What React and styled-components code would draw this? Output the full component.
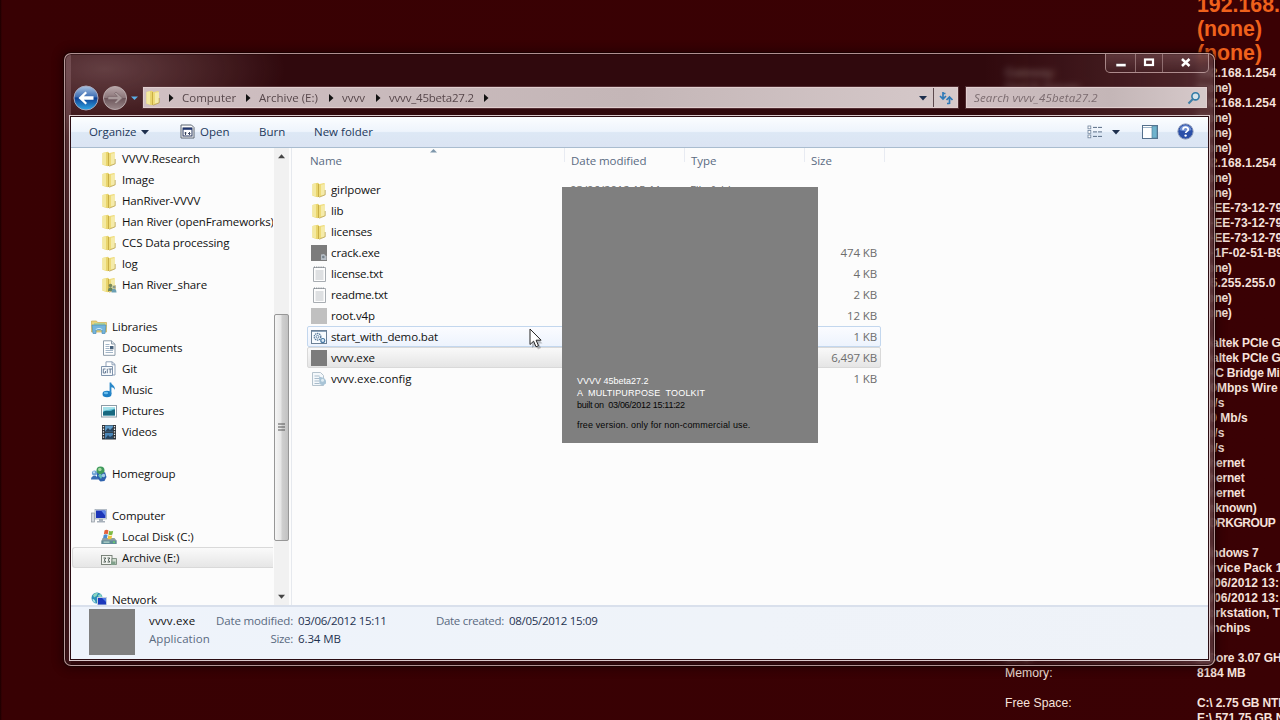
import React from "react";
import styled, { createGlobalStyle, css } from "styled-components";

const Global = createGlobalStyle`
  html, body { margin: 0; padding: 0; background: #380103; }
  * { box-sizing: border-box; }
  svg { display: block; flex: none; }
`;

const ui = '"Open Sans", "Noto Sans", sans-serif';
const arial = '"Liberation Sans", Arial, sans-serif';

const Desktop = styled.div`
  position: relative;
  width: 1280px;
  height: 720px;
  overflow: hidden;
  background: linear-gradient(90deg, #1a0000 0, #380103 2px, #3a0104 100%);
  font-family: ${ui};
  font-size: 11.5px;
  letter-spacing: -0.13px;
  color: #111;
  white-space: nowrap;
`;

/* ---------- desktop system info ---------- */
const InfoPanel = styled.div`
  position: absolute;
  left: 1005px;
  top: -7px;
  width: 275px;
  height: 727px;
  overflow: hidden;
  display: grid;
  grid-template-columns: 192px 1fr;
  align-content: start;
  font-family: ${arial};
  color: #f6e2dc;
  letter-spacing: 0.15px;
`;
const InfoHeads = styled.div`
  grid-column: 2;
  height: 72px;
  font-size: 21.3px;
  line-height: 24px;
  font-weight: 700;
  color: #f0611c;
  letter-spacing: 0;
`;
const InfoLabel = styled.div`
  height: 15px;
  line-height: 16px;
  font-size: 12.2px;
  letter-spacing: 0.02px;
`;
const InfoValue = styled(InfoLabel)`
  font-weight: 700;
  font-size: 12px;
  letter-spacing: ${(p) => p.$ls}px;
`;

const IP = ["192.168.1.254", 0.18];
const NONE = ["(none)", -0.4];
const MAC = ["00-EE-73-12-79", -0.02];
const values = [
  IP, NONE, IP, NONE, NONE, NONE, IP, NONE, NONE,
  MAC, MAC, MAC, ["00-1F-02-51-B9", 0.05], NONE, ["255.255.255.0", 0.15], NONE, NONE, [""],
  ["Realtek PCIe G", -0.12], ["Realtek PCIe G", -0.12], ["MAC Bridge Mi", -0.2], ["300Mbps Wire", 0], ["Mb/s", 0], ["100 Mb/s", 0],
  ["Mb/s", 0], ["Mb/s", 0], ["Ethernet", -0.15], ["Ethernet", -0.15], ["Ethernet", -0.15], ["(unknown)", -0.12],
  ["WORKGROUP", -0.4], [""], ["Windows 7", -0.1], ["Service Pack 1", 0.1],
  ["03/06/2012 13:", 0.1], ["03/06/2012 13:", 0.1], ["Workstation, T", 0], ["Benchips", -0.1], [""],
  ["6-Core 3.07 GH", -0.1], ["8184 MB", 0], [""],
  ["C:\\ 2.75 GB NTF", -0.15], ["E:\\ 571.75 GB N", -0.1],
];
const labels = { 0: "Gateway:", 1: "DHCP Server:", 39: "CPU:", 40: "Memory:", 42: "Free Space:" };

/* ---------- window ---------- */
const Window = styled.div`
  position: absolute;
  left: 64px;
  top: 53px;
  width: 1151px;
  height: 613px;
  border: 1px solid rgba(225, 195, 195, 0.72);
  border-radius: 7px;
  padding: 0 4px 4px;
  display: flex;
  flex-direction: column;
  backdrop-filter: blur(3px);
  background:
    radial-gradient(ellipse 180px 70px at 40px 15px, rgba(150, 115, 120, 0.5), rgba(150, 115, 120, 0) 100%),
    linear-gradient(90deg, rgba(150, 110, 115, 0) 80%, rgba(150, 110, 115, 0.25) 97%, rgba(150, 110, 115, 0.35) 100%),
    linear-gradient(180deg, rgba(150, 110, 115, 0.42) 60px, rgba(150, 110, 115, 0.1) 230px) 0 0 / 6px 100% no-repeat,
    rgba(44, 14, 20, 0.62);
  box-shadow: 0 0 0 1px rgba(20, 0, 0, 0.65), 0 0 10px 3px rgba(15, 0, 0, 0.45), inset 0 0 0 1px rgba(30, 5, 8, 0.5);
`;
const TitleBar = styled.div`
  height: 19px;
  display: flex;
  justify-content: flex-end;
  padding-right: 1px;
`;
const Caption = styled.div`
  display: flex;
  width: 104px;
  height: 19px;
  border: 1px solid rgba(215, 185, 185, 0.65);
  border-top: 0;
  border-radius: 0 0 5px 5px;
  background: linear-gradient(rgba(150, 110, 115, 0.35), rgba(70, 35, 40, 0.5));
`;
const CaptionButton = styled.div`
  width: ${(p) => p.$w}px;
  padding-bottom: 2px;
  display: flex;
  align-items: center;
  justify-content: center;
  & + & { border-left: 1px solid rgba(205, 175, 175, 0.5); }
`;
const NavBar = styled.div`
  height: 42px;
  padding: 14px 2px 0 4px;
  display: flex;
  align-items: flex-start;
`;
const NavButtons = styled.div`
  display: flex;
  width: 70px;
  height: 27px;
  margin-top: -2px;
`;
const glassField = css`
  height: 21px;
  border: 1px solid #e2cfcf;
  background: linear-gradient(90deg, #d0bfc2, #c9babc 30%, #c4b6b7 60%, #d6c9ca);
  box-shadow: 0 0 0 1px rgba(90, 55, 60, 0.8);
  display: flex;
  align-items: center;
  color: #57474b;
`;
const AddressBar = styled.div`
  ${glassField}
  width: 815px;
  padding-left: 1px;
  line-height: 19px;
`;
const Crumb = styled.span`
  width: ${(p) => p.$w}px;
  letter-spacing: ${(p) => p.$ls ?? 0}px;
`;
const CrumbArrow = styled.span`
  width: ${(p) => p.$w}px;
  padding-left: ${(p) => p.$pad ?? 0}px;
  display: flex;
`;
const AddressTail = styled.div`
  margin-left: auto;
  display: flex;
  align-items: center;
  height: 19px;
`;
const Refresh = styled.div`
  margin-left: 6px;
  width: 24px;
  height: 19px;
  border-left: 1px solid #5d4a4e;
  display: flex;
  align-items: center;
  justify-content: center;
`;
const SearchBox = styled.div`
  ${glassField}
  margin-left: 8px;
  width: 241px;
  padding: 0 5px 0 7px;
  justify-content: space-between;
  font-style: italic;
  color: #7b6b6f;
  letter-spacing: 0.16px;
`;

const Client = styled.div`
  flex: 1;
  min-height: 0;
  border: 1px solid #d9c8ca;
  outline: 1px solid #2a0c12;
  outline-offset: -2px;
  padding: 1px;
  display: flex;
  flex-direction: column;
  background: #fcfcfc;
`;
const Toolbar = styled.div`
  height: 31px;
  flex: none;
  display: flex;
  align-items: center;
  padding: 0 14px 1px 18px;
  color: #1e395b;
  border-bottom: 1px solid #a9bccf;
  background: linear-gradient(#fbfdff 0, #eef4fc 48%, #dde8f5 52%, #dbe4f3 100%);
  letter-spacing: 0;
`;
const ToolItem = styled.div`
  display: flex;
  align-items: center;
  gap: ${(p) => p.$gap ?? 0}px;
  width: ${(p) => p.$w}px;
  letter-spacing: ${(p) => p.$ls ?? 0}px;
`;
const ToolIcons = styled.div`
  margin-left: auto;
  display: flex;
  align-items: center;
`;
const ToolGap = styled.span`
  width: ${(p) => p.$w}px;
`;
const Body = styled.div`
  flex: 1;
  min-height: 0;
  display: flex;
`;

/* navigation tree */
const Sidebar = styled.div`
  width: 221px;
  display: flex;
  gap: 1px;
  border-right: 1px solid #e6e9ee;
  overflow: hidden;
`;
const Tree = styled.div`
  width: 202px;
  overflow: hidden;
`;
const TreeRow = styled.div`
  height: 21px;
  display: flex;
  align-items: center;
  padding-left: ${(p) => (p.$root ? 18 : 28)}px;
  gap: 5px;
  margin-left: 1px;
  border: 1px solid transparent;
  border-right: 0;
  letter-spacing: -0.13px;
  ${(p) => p.$selected && css`
    border-color: #d9d9d9;
    border-radius: 3px 0 0 3px;
    background: linear-gradient(#fafafa, #e6e6e6);
  `}
`;
const ScrollTrack = styled.div`
  width: 15px;
  display: flex;
  flex-direction: column;
  align-items: center;
  background: #f1f1f1;
`;
const ScrollArrow = styled.div`
  height: 17px;
  width: 15px;
  display: flex;
  align-items: center;
  justify-content: center;
`;
const ScrollThumb = styled.div`
  margin-top: 149px;
  margin-bottom: auto;
  width: 15px;
  height: 227px;
  border: 1px solid #979797;
  border-radius: 2px;
  background: linear-gradient(90deg, #f5f5f5, #e6e6e6 45%, #cfcfcf 55%, #c2c2c2);
  display: flex;
  align-items: center;
  justify-content: center;
`;

/* file list */
const Files = styled.div`
  flex: 1;
  padding-left: 15px;
`;
const Header = styled.div`
  height: 31px;
  display: flex;
  position: relative;
  color: #5a6b82;
  letter-spacing: -0.05px;
`;
const HeaderCell = styled.div`
  width: ${(p) => p.$w}px;
  height: 14px;
  padding-left: ${(p) => p.$pad ?? 6}px;
  line-height: 25px;
  border-right: 1px solid #e8ebf2;
`;
const SortMark = styled.div`
  position: absolute;
  left: 123px;
  top: 0;
`;
const FileRow = styled.div`
  width: 574px;
  height: 21px;
  display: flex;
  align-items: center;
  border: 1px solid transparent;
  border-radius: 2px;
  padding: 0 3px 0 3px;
  ${(p) => p.$state === "hover" && css`
    border-color: #c3d7ee;
    background: linear-gradient(#fbfcff, #edf3fd);
  `}
  ${(p) => p.$state === "selected" && css`
    border-color: #d9d9d9;
    background: linear-gradient(#f9f9f9, #e5e5e5);
  `}
`;
const FileName = styled.span`
  width: 243px;
  padding-left: 4px;
  letter-spacing: ${(p) => p.$ls ?? -0.13}px;
`;
const FileMeta = styled.span`
  width: ${(p) => p.$w}px;
  color: #6d6d6d;
`;
const FileSize = styled(FileMeta)`
  margin-left: auto;
`;

/* details pane */
const Details = styled.div`
  height: 54px;
  flex: none;
  border-top: 2px solid #d9e0ec;
  background: linear-gradient(90deg, #eef3fb, #eff3f9 60%, #eef2f8);
  display: flex;
  padding: 2px 0 0 18px;
`;
const Thumb = styled.div`
  width: 46px;
  height: 46px;
  background: #7f7f7f;
`;
const DetailGrid = styled.div`
  margin: 0 0 0 14px;
  display: grid;
  grid-template-columns: 67px 80px 133px 78px 100px;
  grid-auto-rows: 18px;
  align-items: center;
  align-content: start;
  padding-top: 2px;
  color: #1e3250;
`;
const DetailKey = styled.span`
  color: #5a6a80;
  text-align: right;
  padding-right: 3px;
  margin-left: -10px;
  letter-spacing: ${(p) => p.$ls ?? -0.1}px;
`;
const DetailValue = styled.span`
  padding-left: 2px;
  letter-spacing: ${(p) => p.$ls ?? -0.1}px;
`;
const DetailName = styled.span`
  color: #111;
  letter-spacing: 0.18px;
`;
const DetailKind = styled.span`
  color: #5a6a80;
  letter-spacing: 0.08px;
`;

/* splash */
const Splash = styled.div`
  position: absolute;
  left: 562px;
  top: 187px;
  width: 256px;
  height: 256px;
  background: #7f7f7f;
  padding: 188px 0 0 15px;
  font-family: ${arial};
  font-size: 9px;
  line-height: 12px;
`;
const SplashLine = styled.div`
  color: ${(p) => (p.$light ? "#fff" : "#050505")};
  letter-spacing: ${(p) => p.$ls ?? 0}px;
  margin-top: ${(p) => p.$gap ?? 0}px;
  white-space: pre;
`;
const Pointer = styled.div`
  position: absolute;
  left: 529px;
  top: 328px;
`;

/* ---------- icons ---------- */
const Folder = ({ share }) => (
  <svg width="16" height="16" viewBox="0 0 16 16">
    <path d="M1.500 2 7 .8l1 1V14.500l-1.500.8-5-1.600z" fill="#e9d56d" />
    <path d="M1.500 2 5 1.200v13.300l-3.500-1z" fill="#f4e9a0" />
    <path d="M7.500 2.300 13 1l1 .8v11l-6 2.200z" fill="#eedb78" />
    <path d="M10 2.700l4-.6v10.300l-4 1.200z" fill="#f5ebaa" />
    <path d="M7.500 2V15" stroke="#c9ae45" strokeWidth="1" />
    <path d="M14.200 8v4.800l-6 2.400" stroke="#b9a14c" strokeWidth=".8" fill="none" />
    {share && (
      <g>
        <circle cx="9.500" cy="8.500" r="1.800" fill="#7d8a5a" />
        <path d="M7 14c0-5 5-5 5 0z" fill="#69855f" />
        <circle cx="13" cy="10" r="1.600" fill="#8d9a8a" />
        <path d="M10.500 15.500c0-5 5-5 5 0z" fill="#6a9fb4" />
      </g>
    )}
  </svg>
);
const Libraries = () => (
  <svg width="16" height="16" viewBox="0 0 16 16">
    <path d="M.5 2h5l1 1.500h9V13H.5z" fill="#ead37a" stroke="#c8ad55" strokeWidth=".7" />
    <path d="M3 4h11v3H3z" fill="#a9cf9a" />
    <path d="M1 6h14l-1 8.500h-3V11H5v3.500H2z" fill="#74b5dd" stroke="#4c8cb8" strokeWidth=".7" />
    <path d="M5 11c0-2 6-2 6 0" fill="none" stroke="#d6edf8" />
  </svg>
);
const Doc = () => (
  <svg width="16" height="16" viewBox="0 0 16 16">
    <path d="M2.500.8h8L14 4v11.300H2.500z" fill="#fff" stroke="#8b9aa8" />
    <path d="M10.500.8V4H14" fill="#dde5ec" stroke="#8b9aa8" />
    <path d="M4.500 4.500h4M4.500 6.500h4M4.500 8.500h4M4.500 10.500h7.500M4.500 12.500h7.500" stroke="#9aaec2" strokeWidth=".9" />
    <path d="M9 6h3.500v3.300H9z" fill="#48627c" />
  </svg>
);
const Git = () => (
  <svg width="16" height="16" viewBox="0 0 16 16">
    <path d="M5 .8h6l3 2.500V14H5z" fill="#fff" stroke="#8fa1b8" />
    <path d="M11 .8v3h3" fill="none" stroke="#8fa1b8" />
    <path d="M.5 5.500h11v9H.5z" fill="#f6f9fc" stroke="#7f93ac" />
    <path d="M4.500 8H2.300v4h2.200v-2M6.300 7.800v4.400M7.500 8H11M9.200 8v4.200" stroke="#687c96" fill="none" />
  </svg>
);
const Music = () => (
  <svg width="16" height="16" viewBox="0 0 16 16">
    <ellipse cx="6" cy="12" rx="4.500" ry="3.200" fill="#1d7fc4" />
    <ellipse cx="5" cy="11" rx="2.200" ry="1.300" fill="#6cbdec" />
    <path d="M8.600 12V.5h1.600c.3 2.700 4.200 3 3.700 7.500-.5-1.700-1.800-2.600-3.500-2.800V12z" fill="#2a88c9" />
  </svg>
);
const Pictures = () => (
  <svg width="16" height="16" viewBox="0 0 16 16">
    <rect x=".5" y="2.500" width="15" height="11.500" fill="#fff" stroke="#8c9ba6" />
    <rect x="2" y="4" width="12" height="8.500" fill="#59bcd3" />
    <path d="M2 9.500c3-3 5-1 7-1.500s3-2 5-1.500v6H2z" fill="#17687f" />
    <path d="M2 4h12v1.500L2 8z" fill="#a6e1ea" />
  </svg>
);
const Videos = () => (
  <svg width="16" height="16" viewBox="0 0 16 16">
    <rect x="1" y="1" width="14" height="14.500" fill="#2d3238" />
    <rect x="4" y="1.500" width="8" height="6.300" fill="#5f9bc8" />
    <rect x="4" y="8.800" width="8" height="6.200" fill="#4a86b8" />
    <path d="M4 7.500 7 4l2 2 3-3v4.800H4zM4 15l3-4 2 2 3-2v4z" fill="#28455f" />
    <path d="M2.500 2v13M13.500 2v13" stroke="#e8edf0" strokeWidth="1.300" strokeDasharray="1.300 1.300" />
  </svg>
);
const Homegroup = () => (
  <svg width="16" height="16" viewBox="0 0 16 16">
    <circle cx="3.500" cy="7" r="2.600" fill="#6fa2d6" />
    <path d="M0 13.500c0-5 7-5 7 0z" fill="#3a6db4" />
    <circle cx="9.500" cy="4.500" r="4" fill="#3f9a5c" />
    <circle cx="8.800" cy="3.500" r="1.800" fill="#a6daa0" />
    <path d="M6 6.500 9 9l5-3 1.500 5-2 4-4 .5L6 12z" fill="#2f62ae" />
    <path d="M7 9.500 9.500 8l2 2-1.500 3z" fill="#5fc0b6" />
    <circle cx="12.500" cy="9.500" r="1.700" fill="#9fcbe8" />
    <circle cx="3" cy="6.300" r="1.100" fill="#c5dff3" />
  </svg>
);
const Computer = () => (
  <svg width="16" height="16" viewBox="0 0 16 16">
    <rect x=".5" y="5" width="3" height="9" fill="#d5dae0" stroke="#8d969f" strokeWidth=".7" />
    <rect x="4" y="1.500" width="11.500" height="9.500" fill="#dfe5ec" stroke="#9aa5b3" strokeWidth=".7" />
    <rect x="5" y="2.500" width="9.500" height="7.500" fill="#1c35b8" />
    <path d="M10 2.500h4.500V8z" fill="#5f86e8" />
    <path d="M8 11h4v2h2v1.500H6V13h2z" fill="#a7b0ba" />
  </svg>
);
const LocalDisk = () => (
  <svg width="16" height="16" viewBox="0 0 16 16">
    <path d="M1.500 9h12l2 2.500v3.500H.5v-3z" fill="#8f9ea2" />
    <path d="M.5 11.500h15V15H.5z" fill="#5f8c98" />
    <path d="M2.500 12.500h6v1.300h-6z" fill="#b5d5cc" />
    <circle cx="13" cy="13.300" r="1" fill="#69d36a" />
    <path d="M3.500 1.500q2-1.500 4 0l-.8 3.700q-2-1-3.800 0z" fill="#e3603a" />
    <path d="M8.200 1.700q2 1 4 0l-.8 3.800q-2 1-4 0z" fill="#7db943" />
    <path d="M2.700 5.900q2-1.100 3.900 0L5.800 9.500q-2-1-3.800 0z" fill="#4a8dd2" />
    <path d="M7.300 6.200q2 1 3.900 0l-.8 3.600q-2 1-3.900 0z" fill="#efc43c" />
  </svg>
);
const Archive = () => (
  <svg width="16" height="16" viewBox="0 0 16 16">
    <rect x=".5" y="5.500" width="10.500" height="9" fill="#f2f4f0" stroke="#707a70" strokeWidth=".9" />
    <path d="M2.500 8h2.300l-1.500 2 1.500 2H2.500M6.500 8h2.300l-1.500 2 1.500 2H6.500" fill="none" stroke="#4e5c56" />
    <path d="M11 8.500h4.500v6H11z" fill="#cfdccf" stroke="#6c7d70" strokeWidth=".8" />
    <path d="M10 11.500h4.500v3.500H10z" fill="#80a08b" />
  </svg>
);
const Network = () => (
  <svg width="16" height="16" viewBox="0 0 16 16">
    <circle cx="6" cy="6" r="5.500" fill="#2d8fb9" />
    <path d="M2 3c2-2 4-2.500 5-2L5.500 4 3 5.500zM7 3l3-1 1 3-3 2z" fill="#8bd6c0" />
    <path d="M1.500 7c2 0 3 2 3 4-2-1-3-2-3-4z" fill="#b4e6e2" />
    <rect x="6.500" y="5.500" width="9" height="7.500" fill="#1b38bc" stroke="#c4d0de" />
    <path d="M11 6h4v4z" fill="#527fe6" />
    <path d="M9 13.500h4V15H9z" fill="#9ba6b3" />
  </svg>
);
const Block = ({ fill, mark }) => (
  <svg width="16" height="16" viewBox="0 0 16 16">
    <rect width="16" height="16" fill={fill} />
    {mark && <path d="M10 9.500l3-.5 2.500 2.500V15H10z" fill="#b5bcc4" />}
    {mark && <circle cx="12.300" cy="12" r="1.300" fill="#77838d" />}
  </svg>
);
const TextFile = () => (
  <svg width="16" height="16" viewBox="0 0 16 16">
    <path d="M2.500 1.500h12v14h-12z" fill="#fdfdfd" stroke="#a8adb2" />
    <path d="M3 1.300h11" stroke="#868c92" strokeWidth="1.600" strokeDasharray="1 1.200" />
    <path d="M4.500 5h8M4.500 7h8M4.500 9h8M4.500 11h8M4.500 13h8" stroke="#aeb4b9" strokeWidth=".8" />
  </svg>
);
const BatFile = () => (
  <svg width="16" height="16" viewBox="0 0 16 16">
    <rect x=".5" y="1.500" width="15" height="13" fill="#f7fbfe" stroke="#6b8096" />
    <path d="M1 2.500h14" stroke="#8ba3bb" />
    <circle cx="6.500" cy="7.800" r="3.300" fill="none" stroke="#55789b" strokeWidth="1.300" strokeDasharray="1.400 .7" />
    <circle cx="6.500" cy="7.800" r="1.400" fill="none" stroke="#6e8fae" />
    <circle cx="11.800" cy="11.500" r="2" fill="#dceaf5" stroke="#4a7aa5" strokeWidth="1.200" />
  </svg>
);
const ConfigFile = () => (
  <svg width="16" height="16" viewBox="0 0 16 16">
    <path d="M1.500 1.500h8l3 3v10h-11z" fill="#f4f8fb" stroke="#b5c3cd" />
    <path d="M3.500 5h5M3.500 7.500h7M3.500 10h5M3.500 12.500h5" stroke="#a9bccb" />
    <path d="M8 5.500l5 1.500 2 2.500v3L12 14.500 8.500 13z" fill="#a9c4d6" />
    <circle cx="11.500" cy="9.300" r="1.500" fill="#dfecf3" />
  </svg>
);
const Tri = ({ dir = "down", size = 8, fill = "#1e2f4d" }) => {
  const d = { down: "M0 2h8L4 6.500z", up: "M0 6h8L4 1.500z", right: "M2 0v8l4.500-4z" }[dir];
  return (
    <svg width={size} height={size} viewBox="0 0 8 8"><path d={d} fill={fill} /></svg>
  );
};
const BackForward = () => (
  <svg width="68" height="27" viewBox="0 0 68 27">
    <defs>
      <linearGradient id="back" x1="0" y1="0" x2="0" y2="1">
        <stop offset="0" stopColor="#a9c3e2" /><stop offset=".45" stopColor="#3f6fb5" />
        <stop offset=".5" stopColor="#0d3f92" /><stop offset="1" stopColor="#31a7e6" />
      </linearGradient>
      <linearGradient id="fwd" x1="0" y1="0" x2="0" y2="1">
        <stop offset="0" stopColor="#b9a8aa" /><stop offset=".48" stopColor="#8d777b" />
        <stop offset=".52" stopColor="#6d565b" /><stop offset="1" stopColor="#9a8789" />
      </linearGradient>
    </defs>
    <circle cx="13" cy="13" r="12" fill="url(#back)" stroke="#a9a8bc" strokeWidth="1" />
    <path d="M5.500 13 12.500 6.500l1.500 1.500-3.200 3.300h9.700v3.400h-9.700L14 18l-1.500 1.500z" fill="#fff" />
    <circle cx="42" cy="13" r="11.500" fill="url(#fwd)" stroke="#b9a9ab" strokeWidth="1" />
    <path d="M49.500 13 43 7l-1.500 1.500 2.800 2.900H35v3.200h9.300l-2.800 2.900L43 19z" fill="#a99a9b" stroke="#756266" strokeWidth=".6" />
    <path d="M58 11.500h7L61.500 15z" fill="#5aaee6" />
  </svg>
);

const folders = [
  ["VVVV.Research"], ["Image"], ["HanRiver-VVVV"], ["Han River (openFrameworks)"],
  ["CCS Data processing"], ["log"], ["Han River_share", true],
];
const tree = [
  ...folders.map(([t, share]) => ({ t, icon: <Folder share={share} /> })),
  {},
  { t: "Libraries", root: true, icon: <Libraries /> },
  { t: "Documents", icon: <Doc /> },
  { t: "Git", icon: <Git /> },
  { t: "Music", icon: <Music /> },
  { t: "Pictures", icon: <Pictures /> },
  { t: "Videos", icon: <Videos /> },
  {},
  { t: "Homegroup", root: true, icon: <Homegroup /> },
  {},
  { t: "Computer", root: true, icon: <Computer /> },
  { t: "Local Disk (C:)", icon: <LocalDisk /> },
  { t: "Archive (E:)", icon: <Archive />, selected: true },
  {},
  { t: "Network", root: true, icon: <Network /> },
];
const files = [
  { t: "girlpower", icon: <Folder />, date: "03/06/2012 15:11", type: "File folder" },
  { t: "lib", icon: <Folder /> },
  { t: "licenses", icon: <Folder /> },
  { t: "crack.exe", icon: <Block fill="#7c7c7c" mark />, size: "474 KB" },
  { t: "license.txt", icon: <TextFile />, size: "4 KB", ls: -0.2 },
  { t: "readme.txt", icon: <TextFile />, size: "2 KB", ls: -0.22 },
  { t: "root.v4p", icon: <Block fill="#c0c0c0" />, size: "12 KB" },
  { t: "start_with_demo.bat", icon: <BatFile />, size: "1 KB", state: "hover" },
  { t: "vvvv.exe", icon: <Block fill="#7c7c7c" />, size: "6,497 KB", state: "selected" },
  { t: "vvvv.exe.config", icon: <ConfigFile />, size: "1 KB", ls: 0 },
];

export default function App() {
  return (
    <Desktop>
      <Global />
      <InfoPanel>
        <InfoHeads>
          <div>192.168.</div>
          <div>(none)</div>
          <div>(none)</div>
        </InfoHeads>
        {values.map(([text, ls = 0], i) => (
          <React.Fragment key={i}>
            <InfoLabel>{labels[i]}</InfoLabel>
            <InfoValue $ls={ls}>{text}</InfoValue>
          </React.Fragment>
        ))}
      </InfoPanel>

      <Window>
        <TitleBar>
          <Caption>
            <CaptionButton $w={29}>
              <svg width="12" height="12" viewBox="0 0 12 12"><rect x="1" y="7.500" width="10" height="3.300" fill="#fff" stroke="#4a3338" strokeWidth=".6" /></svg>
            </CaptionButton>
            <CaptionButton $w={27}>
              <svg width="12" height="12" viewBox="0 0 12 12"><rect x="2" y="3.500" width="8" height="5.500" fill="none" stroke="#fff" strokeWidth="2.200" /></svg>
            </CaptionButton>
            <CaptionButton $w={46}>
              <svg width="12" height="12" viewBox="0 0 12 12"><path d="m2 3 7.500 7M9.500 3 2 10" stroke="#fff" strokeWidth="2.500" /></svg>
            </CaptionButton>
          </Caption>
        </TitleBar>
        <NavBar>
          <NavButtons><BackForward /></NavButtons>
          <AddressBar>
            <Folder />
            <CrumbArrow $w={21} $pad={6}><Tri dir="right" fill="#111" /></CrumbArrow>
            <Crumb $w={62}>Computer</Crumb>
            <CrumbArrow $w={15}><Tri dir="right" fill="#111" /></CrumbArrow>
            <Crumb $w={68}>Archive (E:)</Crumb>
            <CrumbArrow $w={15}><Tri dir="right" fill="#111" /></CrumbArrow>
            <Crumb $w={32}>vvvv</Crumb>
            <CrumbArrow $w={15}><Tri dir="right" fill="#111" /></CrumbArrow>
            <Crumb $w={93} $ls={-0.2}>vvvv_45beta27.2</Crumb>
            <Tri dir="right" fill="#111" />
            <AddressTail>
              <Tri />
              <Refresh>
                <svg width="16" height="14" viewBox="0 0 16 14">
                  <path d="M5 1v6.500M2 5l3 3 3-3M5 2.500h2.500" fill="none" stroke="#2f7ab8" strokeWidth="1.700" />
                  <path d="M11.500 13V6.500M8.500 9l3-3 3 3M11.500 12.500H9" fill="none" stroke="#2f7ab8" strokeWidth="1.700" />
                </svg>
              </Refresh>
            </AddressTail>
          </AddressBar>
          <SearchBox>
            <span>Search vvvv_45beta27.2</span>
            <svg width="14" height="14" viewBox="0 0 14 14">
              <circle cx="8.500" cy="5.300" r="3.600" fill="#d5e3ea" stroke="#2f7ba6" strokeWidth="1.600" />
              <path d="m5.900 8-4.400 4.500" stroke="#3d7ea6" strokeWidth="2" />
            </svg>
          </SearchBox>
        </NavBar>

        <Client>
          <Toolbar>
            <ToolItem $w={91} $gap={5} $ls={-0.08}>Organize <Tri /></ToolItem>
            <ToolItem $w={79} $gap={5}>
              <svg width="15" height="15" viewBox="0 0 15 15">
                <path d="M1 1h10.500L14 3.500V14H1z" fill="#fdfdfd" stroke="#5b6470" />
                <rect x="3" y="4" width="9" height="8" fill="#fff" stroke="#27365c" />
                <path d="M3 4.800h9" stroke="#20356e" strokeWidth="2" />
                <path d="M4.500 9h2M5.500 8v3M8 9.500h2.500M9.500 8v3" stroke="#3a4660" fill="none" />
              </svg>
              Open
            </ToolItem>
            <ToolItem $w={55}>Burn</ToolItem>
            <ToolItem>New folder</ToolItem>
            <ToolIcons>
              <svg width="16" height="14" viewBox="0 0 16 14">
                {[1, 5.5, 10].map((y) => (
                  <g key={y}>
                    <rect x="1" y={y} width="2.800" height="2.800" fill="#fff" stroke="#6e829b" strokeWidth=".8" />
                    <path d={`M6 ${y + 1.4}h4M11 ${y + 1.4}h4`} stroke="#5a6e88" />
                  </g>
                ))}
              </svg>
              <ToolGap $w={9} />
              <Tri />
              <ToolGap $w={22} />
              <svg width="16" height="14" viewBox="0 0 16 14">
                <rect x=".5" y=".5" width="15" height="13" fill="#fff" stroke="#55708c" />
                <path d="M1 2.500h9" stroke="#9db4c8" />
                <rect x="10" y="1" width="5" height="12" fill="#6fb3cd" stroke="#54809b" strokeWidth=".7" />
              </svg>
              <ToolGap $w={19} />
              <svg width="17" height="17" viewBox="0 0 17 17">
                <circle cx="8.500" cy="8.500" r="7.600" fill="#2a4fa8" stroke="#8593b5" />
                <path d="M2.500 7a6.200 6.200 0 0 1 12 0q-6 2.500-12 0z" fill="#6f8fd2" />
                <path d="M6 6.700c0-3.400 5.200-3.200 5.200-.3 0 2-2.500 1.900-2.500 3.700" fill="none" stroke="#fff" strokeWidth="1.800" />
                <circle cx="8.600" cy="12.600" r="1.200" fill="#fff" />
              </svg>
            </ToolIcons>
          </Toolbar>
          <Body>
            <Sidebar>
              <Tree>
                {tree.map((r, i) => (
                  <TreeRow key={i} $root={r.root} $selected={r.selected}>{r.icon}<span>{r.t}</span></TreeRow>
                ))}
              </Tree>
              <ScrollTrack>
                <ScrollArrow><Tri dir="up" size={7} fill="#444" /></ScrollArrow>
                <ScrollThumb>
                  <svg width="8" height="9" viewBox="0 0 8 9"><path d="M0 1h7M0 4h7M0 7h7" stroke="#555" /></svg>
                </ScrollThumb>
                <ScrollArrow><Tri size={7} fill="#444" /></ScrollArrow>
              </ScrollTrack>
            </Sidebar>
            <Files>
              <Header>
                <HeaderCell $w={258} $pad={3}>Name</HeaderCell>
                <HeaderCell $w={120}>Date modified</HeaderCell>
                <HeaderCell $w={120}>Type</HeaderCell>
                <HeaderCell $w={80}>Size</HeaderCell>
                <SortMark>
                  <svg width="7" height="5" viewBox="0 0 7 5"><path d="M0 4.500h7L3.500 1z" fill="#7e97ab" /></svg>
                </SortMark>
              </Header>
              {files.map((f) => (
                <FileRow key={f.t} $state={f.state}>
                  {f.icon}
                  <FileName $ls={f.ls}>{f.t}</FileName>
                  {f.date && <FileMeta $w={120}>{f.date}</FileMeta>}
                  {f.type && <FileMeta $w={110}>{f.type}</FileMeta>}
                  {f.size && <FileSize>{f.size}</FileSize>}
                </FileRow>
              ))}
            </Files>
          </Body>
          <Details>
            <Thumb />
            <DetailGrid>
              <DetailName>vvvv.exe</DetailName>
              <DetailKey $ls={-0.15}>Date modified:</DetailKey>
              <DetailValue $ls={-0.3}>03/06/2012 15:11</DetailValue>
              <DetailKey $ls={-0.3}>Date created:</DetailKey>
              <DetailValue $ls={-0.3}>08/05/2012 15:09</DetailValue>
              <DetailKind>Application</DetailKind>
              <DetailKey $ls={-0.3}>Size:</DetailKey>
              <DetailValue>6.34 MB</DetailValue>
            </DetailGrid>
          </Details>
        </Client>
      </Window>

      <Splash>
        <SplashLine $light>VVVV 45beta27.2</SplashLine>
        <SplashLine $light $ls={0.17}>A  MULTIPURPOSE  TOOLKIT</SplashLine>
        <SplashLine $ls={-0.28}>built on  03/06/2012 15:11:22</SplashLine>
        <SplashLine $gap={8} $ls={0.14}>free version. only for non-commercial use.</SplashLine>
      </Splash>

      <Pointer>
        <svg width="14" height="22" viewBox="0 0 14 22">
          <path d="M3 4v16l3.500-3 2.500 4.500 3-1.500-2-4.500h3.500z" fill="rgba(0,0,0,.22)" />
          <path d="M1 1v15.500l3.600-3.300 2.400 5.600 2.500-1.100-2.400-5.500h5z" fill="#fff" stroke="#222" strokeWidth="1" />
        </svg>
      </Pointer>
    </Desktop>
  );
}
